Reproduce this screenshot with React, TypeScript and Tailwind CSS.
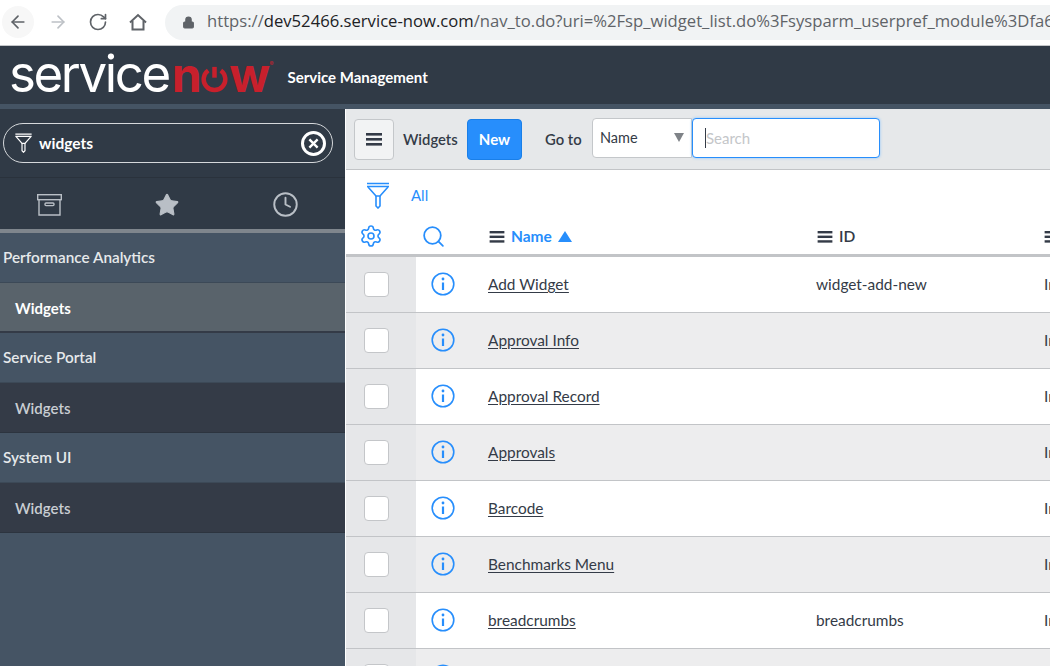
import { ArrowLeft, ArrowRight, RotateCw, Lock, Settings, Search, Star, Clock } from "lucide-react";

const font = "font-['Lato','Noto_Sans',sans-serif]";

function Funnel({ className }: { className?: string }) {
  return (
    <svg viewBox="0 0 24 27" fill="none" stroke="currentColor" strokeWidth="1.6" className={className}>
      <path d="M1 1.5h22M1 4.5h22" />
      <path d="M2 5l8 9h4l8-9" />
      <path d="M10 14v10l2 2 2-2V14" />
    </svg>
  );
}

function Bars({ className }: { className?: string }) {
  return (
    <svg viewBox="0 0 16 13" fill="#343b47" className={className}>
      <rect y="0" width="16" height="2.6" />
      <rect y="5" width="16" height="2.6" />
      <rect y="10" width="16" height="2.6" />
    </svg>
  );
}

function HomeIcon() {
  return (
    <svg viewBox="0 0 20 20" fill="none" stroke="#5f6368" strokeWidth="2" className="ml-[20px] h-[20px] w-[20px]">
      <path d="M2 10.5L10 3l8 7.5" />
      <path d="M4.5 9v8.5h11V9" />
    </svg>
  );
}

function BoxIcon() {
  return (
    <svg viewBox="0 0 25 22" fill="none" stroke="#b9bfc6" strokeWidth="1.4" className="h-[22px] w-[25px]">
      <rect x="0.7" y="0.7" width="23.6" height="5" />
      <path d="M2 6v15h21V6" />
      <rect x="8" y="9" width="9" height="2.6" rx="1" />
    </svg>
  );
}

function InfoIcon() {
  return (
    <svg viewBox="0 0 24 24" fill="none" stroke="#278efc" className="h-[24px] w-[24px]">
      <circle cx="12" cy="12" r="10.8" strokeWidth="1.6" />
      <circle cx="12" cy="7" r="1.4" fill="#278efc" stroke="none" />
      <path d="M12 10.5V18" strokeWidth="2.2" />
    </svg>
  );
}

function Logo() {
  return (
    <div className="flex -translate-y-[2px] items-baseline font-['Inter',sans-serif] text-[51px] leading-none">
      <span className="tracking-[-2.4px] text-white">service</span>
      <span className="ml-[3px] flex items-baseline text-[48px] font-bold tracking-[-1.5px] text-[#c8202c]">
        n
        <svg viewBox="0 0 30 30" fill="none" stroke="#c8202c" strokeWidth="5" className="mx-[1px] h-[27px] w-[27px] translate-y-[1px]">
          <path d="M8 5a12 12 0 1 0 14 0" />
          <path d="M15 1v12" />
        </svg>
        w
      </span>
      <span className="ml-[1px] -translate-y-[26px] text-[6px] text-[#c8202c]">®</span>
    </div>
  );
}

function NavGroup({ title, active }: { title: string; active?: boolean }) {
  return (
    <>
      <div className="flex h-[50px] items-center border-b border-[#3c4957] bg-[#455464] pl-[3px] text-[15.3px] font-semibold text-[#e6e9eb]">
        {title}
      </div>
      <div
        className={
          active
            ? "flex h-[50px] items-center border-b-2 border-[#343b47] bg-[#59636b] pl-[15px] pt-[2px] text-[15px] font-bold text-white"
            : "flex h-[50px] items-center border-b border-[#2c343f] bg-[#343b47] pl-[15px] pt-[2px] text-[15px] font-semibold text-[#c9ced3]"
        }
      >
        Widgets
      </div>
    </>
  );
}

const rows = [
  { name: "Add Widget", id: "widget-add-new" },
  { name: "Approval Info", id: "" },
  { name: "Approval Record", id: "" },
  { name: "Approvals", id: "" },
  { name: "Barcode", id: "" },
  { name: "Benchmarks Menu", id: "" },
  { name: "breadcrumbs", id: "breadcrumbs" },
  { name: "", id: "" },
];

export default function App() {
  return (
    <div className={`flex h-[666px] w-[1050px] flex-col overflow-hidden bg-white ${font}`}>
      {/* browser chrome */}
      <div className="flex h-[46px] shrink-0 items-center border-b border-[#c4c6c9] bg-white pb-[1px]">
        <div className="ml-[2px] flex h-[32px] w-[32px] items-center justify-center rounded-full bg-[#f7f7f7]">
          <ArrowLeft className="h-[20px] w-[20px] text-[#5f6368]" strokeWidth={2} />
        </div>
        <ArrowRight className="ml-[14px] h-[20px] w-[20px] text-[#bdc1c6]" strokeWidth={2} />
        <RotateCw className="ml-[20px] h-[20px] w-[20px] text-[#5f6368]" strokeWidth={2} />
        <HomeIcon />
        <div className="ml-[17px] flex h-[35px] flex-1 items-center overflow-hidden rounded-l-full bg-[#f1f3f4] pl-[17px]">
          <Lock className="h-[13px] w-[13px] shrink-0 fill-[#5f6368] text-[#5f6368]" strokeWidth={2} />
          <span className="ml-[12px] -translate-y-[1px] whitespace-nowrap font-['Open_Sans',sans-serif] text-[16.65px] text-[#5f6368]">
            https://<span className="text-[#202124]">dev52466.service-now.com</span>/nav_to.do?uri=%2Fsp_widget_list.do%3Fsysparm_userpref_module%3Dfa6
          </span>
        </div>
      </div>

      {/* app header */}
      <div className="flex h-[58px] shrink-0 items-center bg-[#303a46] pl-[9px]">
        <Logo />
        <span className="ml-[14px] pt-[4px] text-[15px] font-bold text-white">Service Management</span>
      </div>
      <div className="h-[5px] shrink-0 bg-[#455464]" />

      <div className="flex min-h-0 flex-1">
        {/* sidebar */}
        <div className="flex w-[345px] shrink-0 flex-col bg-[#455464]">
          <div className="h-[69px] border-b border-[#2a323c] bg-[#303a46] pl-[3px] pr-[12px] pt-[14px]">
            <div className="flex h-[40px] items-center rounded-full border border-[#d5d8db] pl-[10px] pr-[6px]">
              <Funnel className="h-[20px] w-[19px] text-white" />
              <span className="ml-[6px] flex-1 pt-[1px] text-[15.5px] font-bold text-white">widgets</span>
              <div className="flex h-[25px] w-[25px] items-center justify-center rounded-full border-[3px] border-white text-white">
                <svg viewBox="0 0 12 12" stroke="currentColor" strokeWidth="2.6" className="h-[11px] w-[11px]">
                  <path d="M1.5 1.5l9 9M10.5 1.5l-9 9" />
                </svg>
              </div>
            </div>
          </div>
          <div className="grid h-[51px] grid-cols-3 items-center bg-[#303a46] pt-[2px]">
            <div className="ml-[37px]"><BoxIcon /></div>
            <Star className="ml-[39px] h-[26px] w-[26px] fill-[#b9bfc6] text-[#b9bfc6]" strokeWidth={1} />
            <Clock className="ml-[42px] h-[27px] w-[27px] text-[#b9bfc6]" strokeWidth={1.7} />
          </div>
          <div className="h-[4px] bg-[#7f868d]" />
          <NavGroup title="Performance Analytics" active />
          <NavGroup title="Service Portal" />
          <NavGroup title="System UI" />
        </div>

        {/* main panel */}
        <div className="ml-[1px] flex min-w-0 flex-1 flex-col bg-white">
          <div className="flex h-[61px] shrink-0 items-center border-b border-[#c2c4c7] bg-[#e6e8ea] pl-[8px]">
            <button className="flex h-[41px] w-[40px] items-center justify-center rounded-[4px] border border-[#c4c7ca] bg-[#f2f3f4]">
              <Bars className="h-[13px] w-[16px]" />
            </button>
            <span className="ml-[9px] w-[55px] text-[14.8px] font-semibold text-[#343b47]">Widgets</span>
            <button className="ml-[9px] h-[41px] w-[55px] rounded-[4px] border border-[#1a7fe8] bg-[#278efc] text-[15px] font-bold text-white">
              New
            </button>
            <span className="ml-[23px] w-[37px] whitespace-nowrap text-[14.8px] font-semibold text-[#343b47]">Go to</span>
            <div className="mb-[2px] ml-[10px] flex h-[40px] w-[100px] items-center justify-between rounded-l-[4px] border border-[#c4c7ca] bg-white pb-[1px] pl-[7px] pr-[7px] text-[14.5px] text-[#343b47]">
              Name
              <span className="h-0 w-0 border-x-[5.5px] border-t-[9px] border-x-transparent border-t-[#7f8388]" />
            </div>
            <div className="mb-[2px] flex h-[40px] w-[188px] items-center rounded-[4px] border border-[#278efc] bg-white pl-[12px] text-[15px] text-[#c4c6c9] shadow-[0_0_3px_#8cc4fd]">
              <span className="h-[20px] w-px bg-[#343b47]" />
              Search
            </div>
          </div>

          <div className="flex h-[50px] shrink-0 items-center pl-[20px]">
            <Funnel className="h-[27px] w-[24px] text-[#278efc]" />
            <span className="ml-[21px] text-[15px] text-[#278efc]">All</span>
          </div>

          <div className="flex h-[37px] shrink-0 items-start border-b-[3px] border-[#c2c4c7]">
            <div className="flex w-[70px] shrink-0 pl-[13px] pt-[4px]">
              <Settings className="h-[24px] w-[24px] text-[#278efc]" strokeWidth={1.6} />
            </div>
            <div className="flex w-[72px] shrink-0 pl-[5px] pt-[4px]">
              <Search className="h-[25px] w-[25px] text-[#278efc]" strokeWidth={1.7} />
            </div>
            <div className="flex h-[28px] w-[328px] shrink-0 items-center pl-[1px] pt-[5px]">
              <Bars className="h-[12px] w-[16px]" />
              <span className="ml-[6px] text-[15.5px] font-bold text-[#278efc]">Name</span>
              <span className="ml-[6px] h-0 w-0 border-x-[7px] border-b-[11px] border-x-transparent border-b-[#278efc]" />
            </div>
            <div className="flex h-[28px] w-[228px] shrink-0 items-center pl-[1px] pt-[5px]">
              <Bars className="h-[12px] w-[16px]" />
              <span className="ml-[6px] text-[15.5px] font-semibold text-[#343b47]">ID</span>
            </div>
            <div className="flex h-[28px] items-center pt-[5px]">
              <Bars className="h-[12px] w-[16px] shrink-0" />
            </div>
          </div>

          {rows.map((row, i) => (
            <div
              key={i}
              className={
                i % 2 === 0
                  ? "flex h-[56px] shrink-0 items-center border-b border-[#c2c4c7] bg-white"
                  : "flex h-[56px] shrink-0 items-center border-b border-[#c2c4c7] bg-[#ededee]"
              }
            >
              <div className="flex h-full w-[70px] shrink-0 items-center bg-[#e6e7e9] pl-[18px]">
                <span className="h-[25px] w-[25px] rounded-[4px] border border-[#c4c6c9] bg-white" />
              </div>
              <div className="flex w-[72px] shrink-0 pb-[2px] pl-[15px]">
                <InfoIcon />
              </div>
              <div className="w-[328px] shrink-0 text-[15.4px] text-[#343b47] underline underline-offset-2">{row.name}</div>
              <div className="w-[228px] shrink-0 text-[15.4px] text-[#343b47]">{row.id}</div>
              {row.name && <div className="shrink-0 text-[15.4px] text-[#343b47]">In</div>}
            </div>
          ))}
        </div>
      </div>
    </div>
  );
}
